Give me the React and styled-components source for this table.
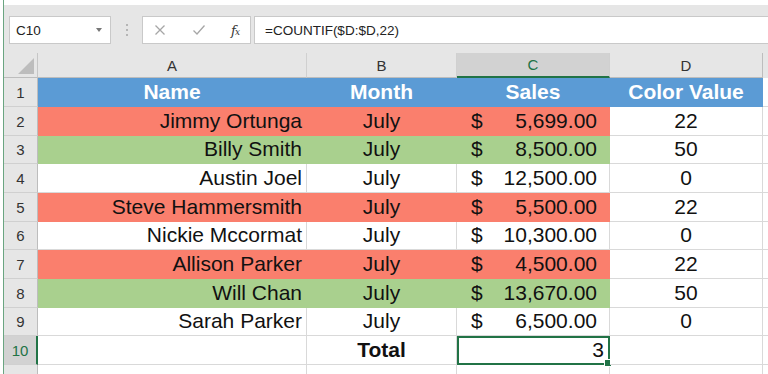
import React from "react";
import styled, { createGlobalStyle } from "styled-components";

const GlobalStyle = createGlobalStyle`
  html, body { margin: 0; padding: 0; background: #fff; }
  body { font-family: "Liberation Sans", Arial, sans-serif; }
`;

const COLS = "34px 269px 150px 153px 153px 1fr";
const GREEN = "#217346";
const GRID = "#d9d9d9";
const FILLS = { blue: "#5b9bd5", red: "#fa7f6d", green: "#a9d08e" };

const Frame = styled.div`
  width: 768px;
  height: 374px;
  overflow: hidden;
  display: flex;
  flex-direction: column;
  box-sizing: border-box;
  padding-left: 3px;
  background: #fff;
`;

const Inner = styled.div`
  flex: 1;
  display: flex;
  flex-direction: column;
  border-left: 1px solid #6aa581;
`;

const TopStrip = styled.div`
  height: 5px;
  background: #fff;
`;

const Toolbar = styled.div`
  height: 48px;
  box-sizing: border-box;
  background: #e6e6e6;
  display: flex;
  align-items: flex-start;
  padding: 11px 0 0 5px;
`;

const Box = styled.div`
  height: 28px;
  box-sizing: border-box;
  background: #fff;
  border: 1px solid #c9c9c9;
  display: flex;
  align-items: center;
  position: relative;
`;

const NameBox = styled(Box)`
  width: 102px;
  padding-left: 6px;
  font-size: 13.5px;
  color: #222;
`;

const Caret = styled.span`
  position: absolute;
  right: 8px;
  top: 11px;
  width: 0;
  height: 0;
  border-left: 3.5px solid transparent;
  border-right: 3.5px solid transparent;
  border-top: 4px solid #777;
`;

const Dots = styled.div`
  width: 31px;
  display: flex;
  flex-direction: column;
  align-items: center;
  gap: 3px;
  padding-top: 8px;
  & > span {
    width: 2px;
    height: 2px;
    background: #b5b5b5;
  }
`;

const ButtonBox = styled(Box)`
  width: 109px;
  justify-content: space-between;
  padding: 0 11px;
`;

const Fx = styled.span`
  font-family: "DejaVu Serif", "Liberation Serif", serif;
  font-style: italic;
  font-size: 13px;
  color: #333;
  letter-spacing: -1px;
  & > small {
    font-size: 9px;
  }
`;

const FormulaBox = styled(Box)`
  flex: 1;
  margin-left: 3px;
  border-right: none;
  padding-left: 10px;
  font-size: 13.5px;
  color: #222;
`;

const Row = styled.div`
  display: grid;
  grid-template-columns: ${COLS};
  height: ${(p) => p.$h}px;
  flex: none;
`;

const HeaderRow = styled(Row)`
  background: #e6e6e6;
`;

const Corner = styled.div`
  border-right: 1px solid #c6c6c6;
  border-bottom: 1px solid #bdbdbd;
  position: relative;
  &::after {
    content: "";
    position: absolute;
    right: 3px;
    bottom: 3px;
    width: 0;
    height: 0;
    border-left: 16px solid transparent;
    border-bottom: 16px solid #bdbdbd;
  }
`;

const ColHead = styled.div`
  display: flex;
  align-items: center;
  justify-content: center;
  font-size: 15px;
  color: ${(p) => (p.$active ? GREEN : "#333")};
  background: ${(p) => (p.$active ? "#d2d2d2" : "transparent")};
  border-right: 1px solid ${(p) => (p.$last ? "#bdbdbd" : "#d0d0d0")};
  border-bottom: ${(p) => (p.$active ? `2px solid ${GREEN}` : "1px solid #bdbdbd")};
  box-sizing: border-box;
`;

const RowHead = styled.div`
  display: flex;
  align-items: center;
  justify-content: center;
  font-size: 15px;
  box-sizing: border-box;
  color: ${(p) => (p.$active ? GREEN : "#333")};
  background: ${(p) => (p.$active ? "#d2d2d2" : "#e6e6e6")};
  border-right: ${(p) => (p.$active ? `2px solid ${GREEN}` : "1px solid #bdbdbd")};
  border-bottom: 1px solid #d0d0d0;
`;

const Cell = styled.div`
  position: relative;
  display: flex;
  align-items: center;
  box-sizing: border-box;
  padding: 0 4px 1px;
  font-size: 21px;
  white-space: nowrap;
  font-weight: ${(p) => (p.$bold ? 700 : 400)};
  justify-content: ${(p) =>
    p.$align === "right" ? "flex-end" : p.$align === "split" ? "space-between" : "center"};
  background: ${(p) => (p.$fill ? FILLS[p.$fill] : "#fff")};
  color: ${(p) => (p.$fill === "blue" ? "#fff" : "#111")};
  border-right: 1px solid ${(p) => (p.$fill ? FILLS[p.$fill] : GRID)};
  border-bottom: 1px solid ${(p) => (p.$fill ? FILLS[p.$fill] : GRID)};
`;

const SalesCell = styled(Cell)`
  padding: 0 12px 1px 14px;
`;

const Selected = styled(Cell)`
  border: 2px solid ${GREEN};
  padding-right: 4px;
  &::after {
    content: "";
    position: absolute;
    right: -4px;
    bottom: -4px;
    width: 6px;
    height: 6px;
    background: ${GREEN};
    border: 1px solid #fff;
  }
`;

const Rest = styled.div`
  flex: 1;
  display: grid;
  grid-template-columns: ${COLS};
`;

const RestHead = styled.div`
  background: #e6e6e6;
  border-right: 1px solid #bdbdbd;
`;

const RestCell = styled.div`
  border-right: 1px solid ${GRID};
`;

const rows = [
  { name: "Jimmy Ortunga", sales: "5,699.00", val: "22", fill: "red" },
  { name: "Billy Smith", sales: "8,500.00", val: "50", fill: "green" },
  { name: "Austin Joel", sales: "12,500.00", val: "0" },
  { name: "Steve Hammersmith", sales: "5,500.00", val: "22", fill: "red" },
  { name: "Nickie Mccormat", sales: "10,300.00", val: "0" },
  { name: "Allison Parker", sales: "4,500.00", val: "22", fill: "red" },
  { name: "Will Chan", sales: "13,670.00", val: "50", fill: "green" },
  { name: "Sarah Parker", sales: "6,500.00", val: "0" },
];

const heights = [29, 29, 28, 29, 29, 28, 29, 29, 28, 29];

const CrossIcon = () => (
  <svg width="12" height="12" viewBox="0 0 12 12">
    <path d="M1.5 1.5 L10.5 10.5 M10.5 1.5 L1.5 10.5" stroke="#a6a6a6" strokeWidth="1.3" fill="none" />
  </svg>
);

const CheckIcon = () => (
  <svg width="14" height="12" viewBox="0 0 14 12">
    <path d="M1.5 6.5 L5 10 L12.5 1.5" stroke="#a6a6a6" strokeWidth="1.3" fill="none" />
  </svg>
);

export default function App() {
  return (
    <Frame>
      <GlobalStyle />
      <Inner>
        <TopStrip />
        <Toolbar>
          <NameBox>
            C10
            <Caret />
          </NameBox>
          <Dots>
            <span />
            <span />
            <span />
          </Dots>
          <ButtonBox>
            <CrossIcon />
            <CheckIcon />
            <Fx>
              f<small>x</small>
            </Fx>
          </ButtonBox>
          <FormulaBox>=COUNTIF($D:$D,22)</FormulaBox>
        </Toolbar>

        <HeaderRow $h={25}>
          <Corner />
          <ColHead>A</ColHead>
          <ColHead>B</ColHead>
          <ColHead $active>C</ColHead>
          <ColHead $last>D</ColHead>
          <div />
        </HeaderRow>

        <Row $h={heights[0]}>
          <RowHead>1</RowHead>
          <Cell $fill="blue" $bold>Name</Cell>
          <Cell $fill="blue" $bold>Month</Cell>
          <Cell $fill="blue" $bold>Sales</Cell>
          <Cell $fill="blue" $bold>Color Value</Cell>
          <Cell />
        </Row>

        {rows.map((r, i) => (
          <Row key={r.name} $h={heights[i + 1]}>
            <RowHead>{i + 2}</RowHead>
            <Cell $fill={r.fill} $align="right">{r.name}</Cell>
            <Cell $fill={r.fill}>July</Cell>
            <SalesCell $fill={r.fill} $align="split">
              <span>$</span>
              <span>{r.sales}</span>
            </SalesCell>
            <Cell>{r.val}</Cell>
            <Cell />
          </Row>
        ))}

        <Row $h={heights[9]}>
          <RowHead $active>10</RowHead>
          <Cell />
          <Cell $bold>Total</Cell>
          <Selected $align="right">3</Selected>
          <Cell />
          <Cell />
        </Row>

        <Rest>
          <RestHead />
          <RestCell />
          <RestCell />
          <RestCell />
          <RestCell />
          <div />
        </Rest>
      </Inner>
    </Frame>
  );
}
